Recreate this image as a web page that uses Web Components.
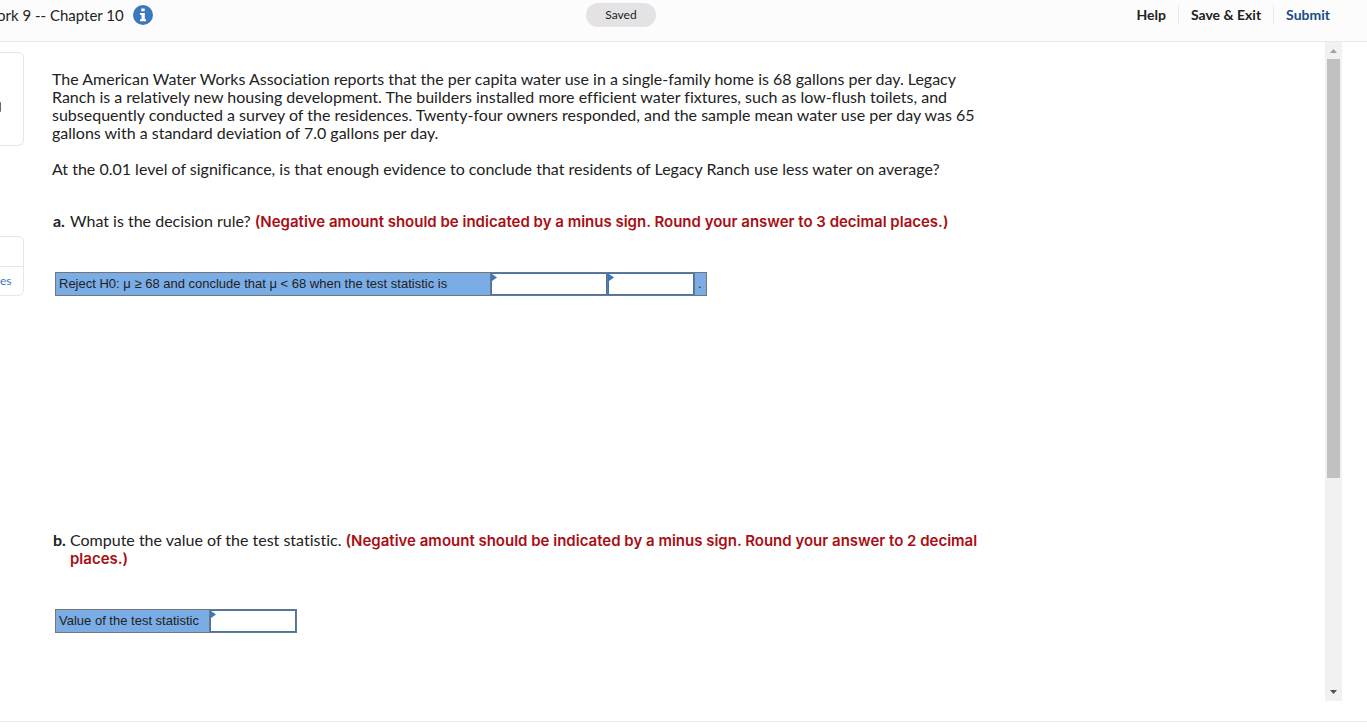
<!DOCTYPE html>
<html lang="en">
<head>
<meta charset="utf-8">
<title>Homework 9 -- Chapter 10</title>
<style>
html, body { height: 100%; margin: 0; overflow: hidden; }
body { font: 16px/18px Lato, "Open Sans", sans-serif; font-variant-ligatures: none; color: #222; background: #fff; }
</style>
</head>
<body>
<quiz-app></quiz-app>
<script>
function define(name, html, connected) {
  const template = document.createElement('template');
  template.innerHTML = html;
  customElements.define(name, class extends HTMLElement {
    constructor() {
      super();
      this.attachShadow({ mode: 'open' }).append(template.content.cloneNode(true));
    }
    connectedCallback() {
      if (connected) connected(this);
    }
  });
}

define('info-button', `
<style>
:host { display: block; }
button { display: block; width: 20px; height: 20px; padding: 0; border: 0; background: none; }
svg { display: block; }
</style>
<button type="button" aria-label="Assignment information">
  <svg width="20" height="20" viewBox="0 0 20 20" aria-hidden="true">
    <circle cx="10" cy="10" r="10" fill="#3a77bd"/>
    <path d="M8.300 3.400h3.400v2.800H8.300zM7 8h4.800v6.200H13v2.100H7v-2.100h1.500v-4.100H7z" fill="#fff"/>
  </svg>
</button>`);

define('app-header', `
<style>
:host { display: grid; grid-template-columns: 1fr auto 1fr; box-sizing: border-box; height: 42px;
  padding-bottom: 11px; background: #fcfcfc; border-bottom: 1px solid #eaeaea; align-items: center; }
.title { display: flex; align-items: center; gap: 9px; min-width: 0; margin-left: -3px; }
h1 { margin: 0; font-size: 15px; line-height: 20px; font-weight: 400; white-space: nowrap; }
.saved { width: 70px; margin-right: 125px; border-radius: 12px; background: #e4e2e5; text-align: center;
  font-size: 12px; line-height: 24px; }
nav { display: flex; justify-content: flex-end; padding-right: 24px; }
a { padding: 0 12px; font-size: 14px; line-height: 20px; font-weight: 700; color: #222; text-decoration: none; white-space: nowrap; }
a + a { border-left: 1px solid #eaeaea; }
a.submit { padding-right: 13px; color: #1b4b87; }
</style>
<div class="title"><h1>ork 9 -- Chapter 10</h1><info-button></info-button></div>
<div class="saved" role="status">Saved</div>
<nav><a href="#help">Help</a><a href="#exit">Save &amp; Exit</a><a class="submit" href="#submit">Submit</a></nav>`);

define('side-rail', `
<style>
:host { display: flex; flex-direction: column; gap: 90px; width: 24px; padding-top: 10px; flex: none; }
.card { box-sizing: border-box; border: 1px solid #e6e6e6; border-left: 0; border-radius: 0 6px 6px 0; }
.points { display: flex; align-items: center; height: 94px; padding-top: 15px; }
.points i { width: 1px; height: 10px; border-radius: 0 2px 2px 0; background: #666; }
.tools { height: 60px; }
.tools div { height: 29px; border-bottom: 1px solid #e6e6e6; }
a { display: block; font-size: 12px; line-height: 28px; color: #3a77bd; text-decoration: none; }
</style>
<div class="card points"><i></i></div>
<div class="card tools"><div></div><a href="#references">es</a></div>`);

define('scroll-track', `
<style>
:host { display: flex; flex-direction: column; width: 17px; flex: none; box-sizing: border-box; background: #f1f1f1; }
svg { display: block; flex: none; }
.track { flex: 1; padding: 0 2px; }
.thumb { height: 67%; background: #c1c1c1; }
</style>
<svg width="17" height="17" aria-hidden="true"><path d="M5 11h7L8.500 7z" fill="#a0a0a0"/></svg>
<div class="track"><div class="thumb"></div></div>
<svg width="17" height="17" aria-hidden="true"><path d="M5 6h7L8.500 10z" fill="#505050"/></svg>`);

define('answer-cell', `
<style>
:host { display: block; position: relative; }
input { display: block; box-sizing: border-box; width: 100%; height: 22px; margin: 0; padding: 0 8px;
  border: 1px solid #3a77bd; border-radius: 0; outline: 0; background: #fff; font: 13px "Liberation Sans", sans-serif; }
svg { position: absolute; left: 1px; top: 1px; pointer-events: none; }
</style>
<input type="text">
<svg width="5" height="7" aria-hidden="true"><path d="M0 0l5 3.500L0 7z" fill="#3a77bd"/></svg>`,
cell => cell.shadowRoot.querySelector('input').setAttribute('aria-label', cell.dataset.label));

define('answer-sheet', `
<style>
:host { display: grid; grid-template-columns: var(--columns); gap: 1px; width: max-content; padding: 1px;
  background: #757575; font: 13px/22px "Liberation Sans", Arial, sans-serif; }
::slotted(span) { padding-left: 3px; background: #7aade6; white-space: nowrap; }
</style>
<slot></slot>`);

define('question-part', `
<style>
:host { display: grid; grid-template-columns: 18px 1fr; }
b { padding-left: 1px; }
p { margin: 0; }
strong { color: #a90e13; font: 600 15px/15px Inter, Lato, sans-serif; }
</style>
<b><slot name="mark"></slot></b>
<p><slot></slot> <strong><slot name="note"></slot></strong></p>`);

define('question-body', `
<style>
:host { display: block; flex: 1; min-width: 0; padding: 28px 28px 0; }
.text { max-width: 936px; }
p { margin: 0 0 18px; }
.a { margin-top: 34px; }
.rule { --columns: 434px 116px 86px 11px; margin: 42px 0 235px 3px; }
.value { --columns: 153px 86px; margin: 42px 0 0 3px; }
</style>
<div class="text">
<p>The American Water Works Association reports that the per capita water use in a single-family home is 68 gallons per day. Legacy Ranch is a relatively new housing development. The builders installed more efficient water fixtures, such as low-flush toilets, and subsequently conducted a survey of the residences. Twenty-four owners responded, and the sample mean water use per day was 65 gallons with a standard deviation of 7.0 gallons per day.</p>
<p>At the 0.01 level of significance, is that enough evidence to conclude that residents of Legacy Ranch use less water on average?</p>
<question-part class="a"><span slot="mark">a.</span>What is the decision rule?<span slot="note">(Negative amount should be indicated by a minus sign. Round your answer to 3 decimal places.)</span></question-part>
</div>
<answer-sheet class="rule"><span>Reject H0: μ ≥ 68 and conclude that μ &lt; 68 when the test statistic is</span><answer-cell data-label="Comparison"></answer-cell><answer-cell data-label="Critical value"></answer-cell><span>.</span></answer-sheet>
<div class="text">
<question-part><span slot="mark">b.</span>Compute the value of the test statistic.<span slot="note">(Negative amount should be indicated by a minus sign. Round your answer to 2 decimal places.)</span></question-part>
</div>
<answer-sheet class="value"><span>Value of the test statistic</span><answer-cell data-label="Value of the test statistic"></answer-cell></answer-sheet>`);

define('quiz-app', `
<style>
:host { display: flex; flex-direction: column; height: 100vh; }
main { display: flex; flex: 1; min-height: 0; padding-right: 25px; }
question-body { overflow: hidden; }
scroll-track { margin-bottom: 20px; }
footer { height: 5px; border-top: 1px solid #eaeaea; flex: none; }
</style>
<app-header></app-header>
<main><side-rail></side-rail><question-body></question-body><scroll-track></scroll-track></main>
<footer></footer>`);
</script>
</body>
</html>
